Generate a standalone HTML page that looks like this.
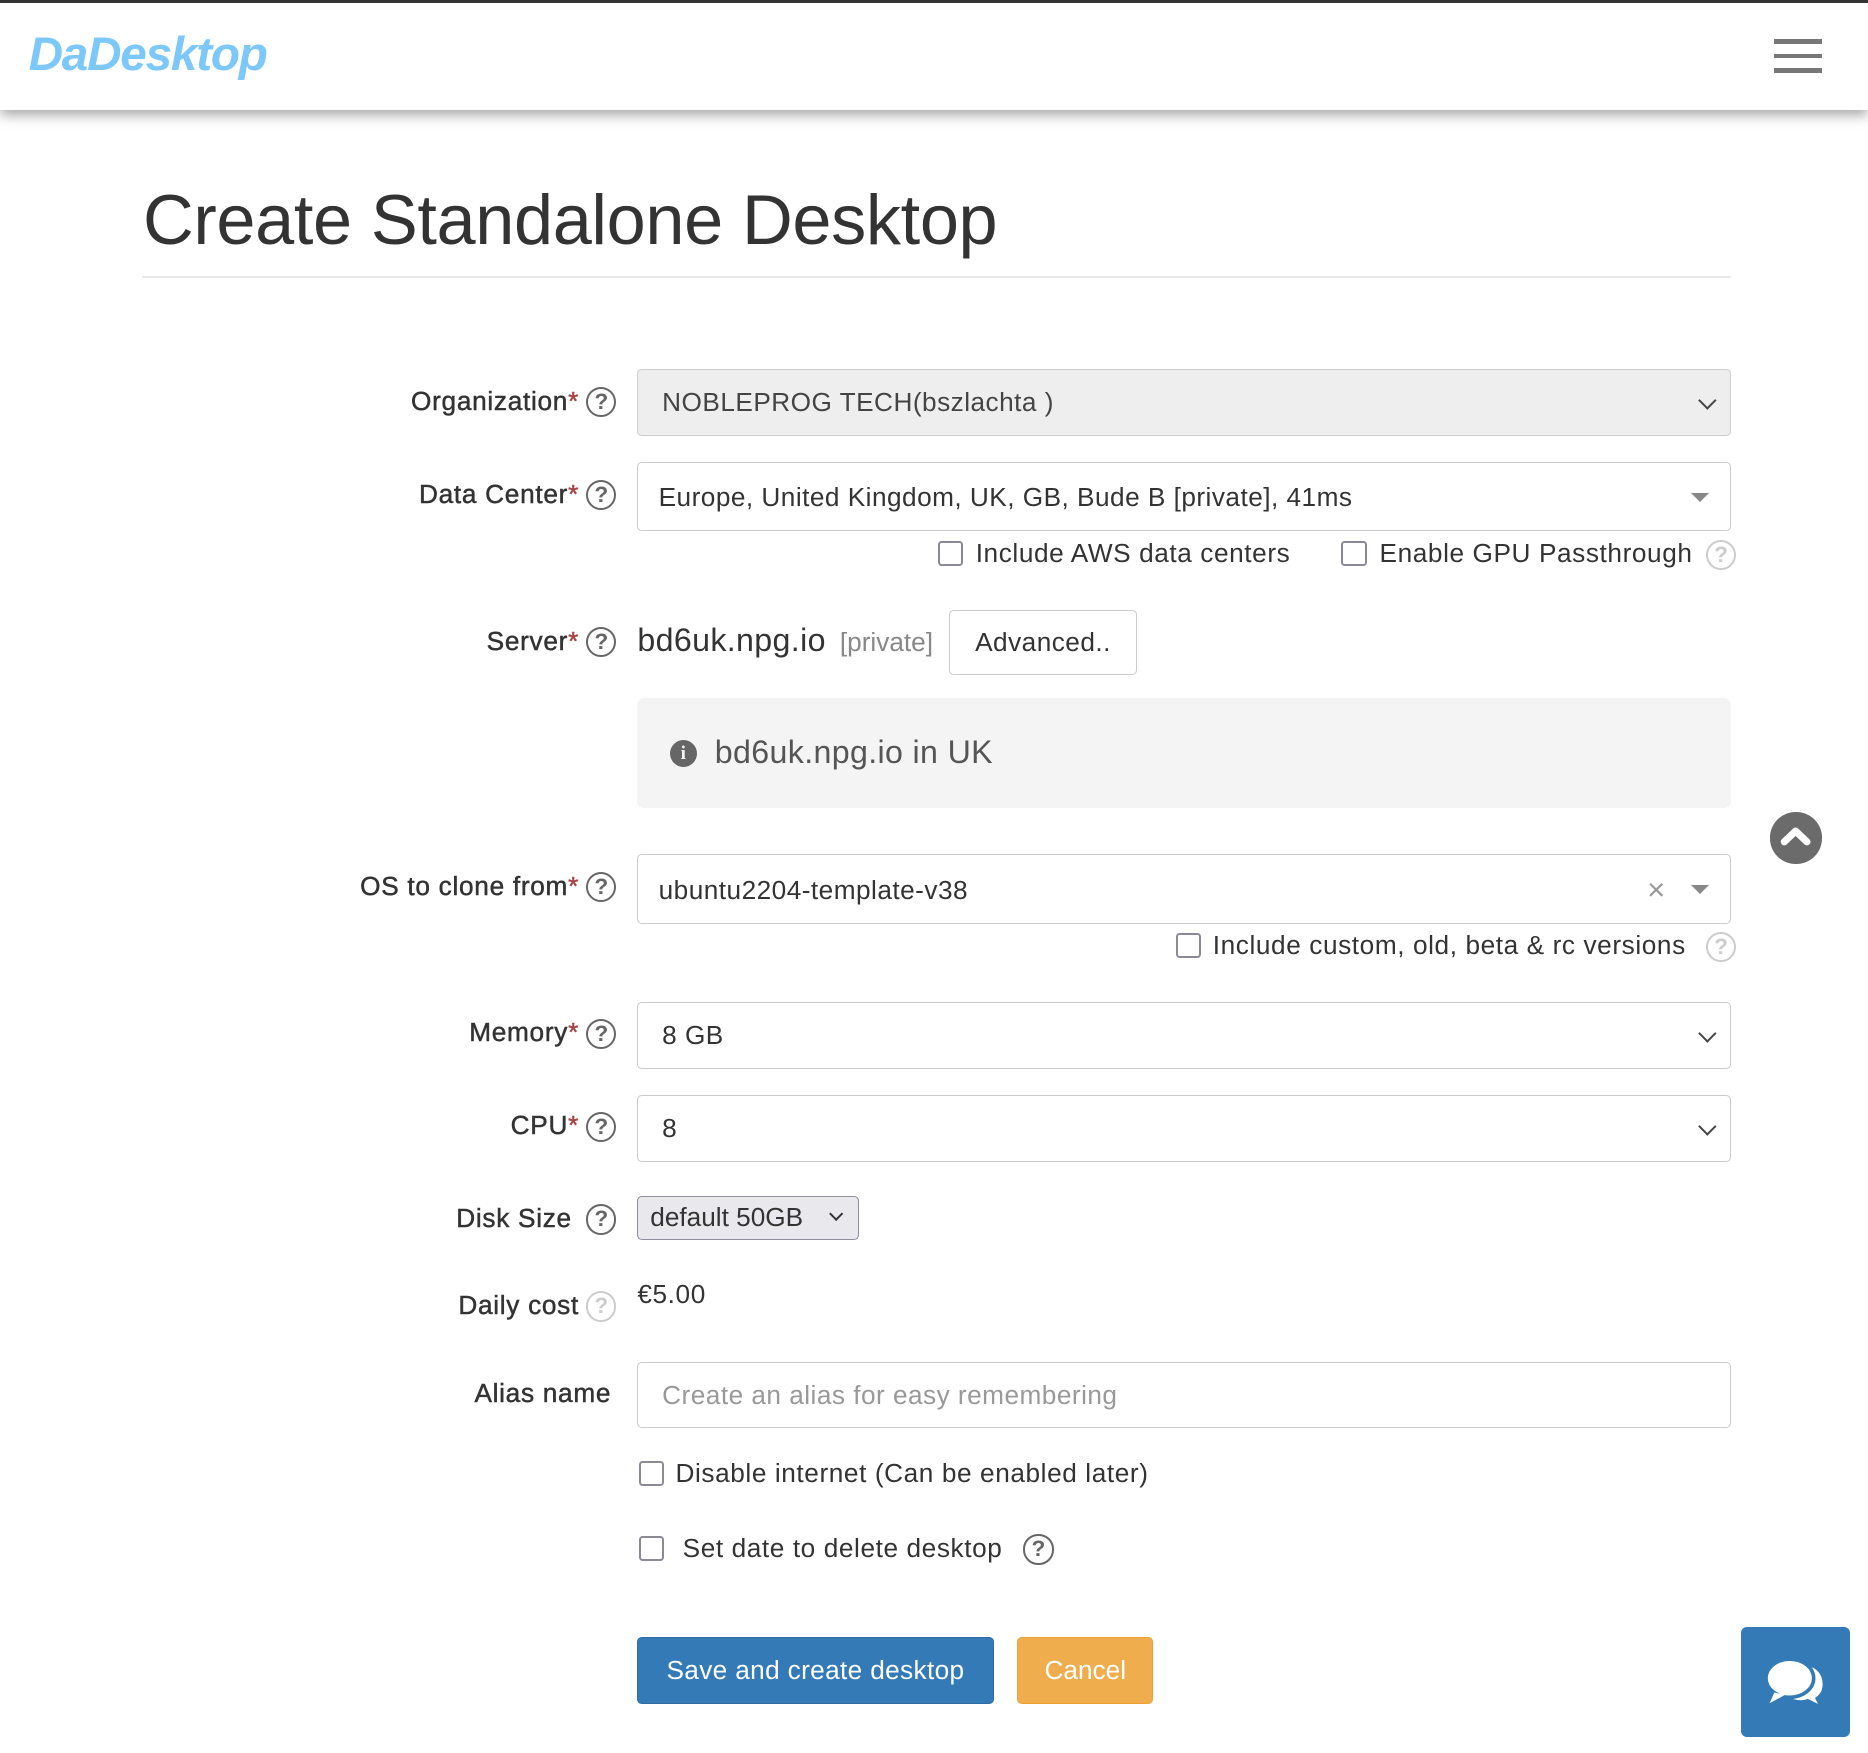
<!DOCTYPE html>
<html><head><meta charset="utf-8"><style>
html{zoom:1.19133}
body{margin:0;width:1568px;height:1471px;position:relative;overflow:hidden;background:#fff;font-family:"Liberation Sans",Arial,sans-serif;color:#333}
.a{position:absolute}
.nav{left:0;top:0;width:1568px;height:92px;border-top:3px solid #333;box-sizing:border-box;background:#fff;box-shadow:0 4px 10px rgba(0,0,0,.35)}
.logo{left:24px;top:23px;font-size:40px;font-weight:bold;font-style:italic;color:#7cc8f8;letter-spacing:-1px}
.bar{left:1489px;width:40px;height:4px;background:#777}
.lbl{font-size:22px;color:#333;text-align:right;width:400px;left:86px;line-height:28px;letter-spacing:0.6px;-webkit-text-stroke:0.4px #333}
.lbl b{color:#a94442;font-weight:normal;-webkit-text-stroke:0.4px #a94442}
.q{width:22px;height:22px;border:2px solid #666;border-radius:50%;font-size:19px;line-height:22px;text-align:center;color:#666;font-weight:bold}
.ql{border-color:#ccc;color:#ccc}
.inp{left:535px;width:918px;box-sizing:border-box;border:1px solid #ccc;border-radius:4px;font-size:22px;color:#333;padding-left:20px;background:#fff;letter-spacing:0.4px}
.chev{right:14px;width:9px;height:9px;border-right:2px solid #444;border-bottom:2px solid #444;transform:rotate(45deg)}
.tri{right:18px;width:0;height:0;border-left:8px solid transparent;border-right:8px solid transparent;border-top:8px solid #888}
.cb{width:18px;height:18px;border:2px solid #8a8a96;border-radius:3px}
.t22{font-size:22px;color:#333;line-height:28px;letter-spacing:0.5px}
</style></head><body>
<div class="a nav"></div>
<div class="a logo">DaDesktop</div>
<div class="a bar" style="top:33px"></div><div class="a bar" style="top:45px"></div><div class="a bar" style="top:57px"></div>

<div class="a" style="left:120px;top:150px;font-size:59px;color:#333;letter-spacing:-0.3px">Create Standalone Desktop</div>
<div class="a" style="left:119px;top:232px;width:1334px;height:1px;background:#e8e8e8"></div>

<div class="a lbl" style="top:323px">Organization<b>*</b></div><div class="a q" style="left:492px;top:325px">?</div>
<div class="a inp" style="top:310px;height:56px;background:#eee;line-height:54px;color:#444">NOBLEPROG TECH(bszlachta )<div class="a chev" style="top:20px"></div></div>

<div class="a lbl" style="top:401px">Data Center<b>*</b></div><div class="a q" style="left:492px;top:403px">?</div>
<div class="a inp" style="top:388px;height:58px;line-height:58px;padding-left:17px">Europe, United Kingdom, UK, GB, Bude B [private], 41ms<div class="a tri" style="top:25px"></div></div>

<div class="a cb" style="left:787px;top:454px"></div><div class="a t22" style="left:819px;top:451px">Include AWS data centers</div>
<div class="a cb" style="left:1126px;top:454px"></div><div class="a t22" style="left:1158px;top:451px">Enable GPU Passthrough</div>
<div class="a q ql" style="left:1432px;top:453px">?</div>

<div class="a lbl" style="top:525px">Server<b>*</b></div><div class="a q" style="left:492px;top:526px">?</div>
<div class="a" style="left:535px;top:522px;font-size:27px;color:#333;letter-spacing:0.3px">bd6uk.npg.io</div>
<div class="a" style="left:705px;top:526px;font-size:22px;color:#888">[private]</div>
<div class="a" style="left:797px;top:512px;width:157px;height:55px;box-sizing:border-box;border:1px solid #ccc;border-radius:4px;text-align:center;line-height:53px;font-size:22px;letter-spacing:0.4px">Advanced..</div>

<div class="a" style="left:535px;top:586px;width:918px;height:92px;background:#f4f4f4;border-radius:6px"></div>
<div class="a" style="left:562px;top:621px;width:23px;height:23px;border-radius:50%;background:#666;color:#f4f4f4;font-size:16px;font-weight:bold;text-align:center;line-height:23px;font-family:'Liberation Serif',serif">i</div>
<div class="a" style="left:600px;top:616px;font-size:27px;color:#555;letter-spacing:0.3px">bd6uk.npg.io in UK</div>

<div class="a" style="left:1486px;top:682px;width:43px;height:43px;border-radius:50%;background:#6b6b6b"></div>
<svg class="a" style="left:1486px;top:682px" width="43" height="43"><path d="M12 25 L21.5 16 L31 25" stroke="#fff" stroke-width="6" fill="none" stroke-linecap="round" stroke-linejoin="round"/></svg>

<div class="a lbl" style="top:730px">OS to clone from<b>*</b></div><div class="a q" style="left:492px;top:732px">?</div>
<div class="a inp" style="top:717px;height:59px;line-height:59px;padding-left:17px">ubuntu2204-template-v38
<div class="a" style="right:54px;top:0;color:#999;font-size:26px">×</div><div class="a tri" style="top:25px"></div></div>
<div class="a cb" style="left:987px;top:783px"></div><div class="a t22" style="left:1018px;top:780px">Include custom, old, beta &amp; rc versions</div>
<div class="a q ql" style="left:1432px;top:782px">?</div>

<div class="a lbl" style="top:853px">Memory<b>*</b></div><div class="a q" style="left:492px;top:855px">?</div>
<div class="a inp" style="top:841px;height:56px;line-height:54px">8 GB<div class="a chev" style="top:20px"></div></div>

<div class="a lbl" style="top:931px">CPU<b>*</b></div><div class="a q" style="left:492px;top:933px">?</div>
<div class="a inp" style="top:919px;height:56px;line-height:54px">8<div class="a chev" style="top:20px"></div></div>

<div class="a lbl" style="top:1009px;width:394px">Disk Size</div><div class="a q" style="left:492px;top:1011px">?</div>
<div class="a" style="left:535px;top:1004px;width:186px;height:37px;box-sizing:border-box;background:#e9e9ed;border:1px solid #8f8f9d;border-radius:4px;font-size:22px;line-height:35px;padding-left:10px">default 50GB<div class="a" style="left:162px;top:10px;width:7px;height:7px;border-right:2px solid #333;border-bottom:2px solid #333;transform:rotate(45deg)"></div></div>

<div class="a lbl" style="top:1082px">Daily cost</div><div class="a q ql" style="left:492px;top:1084px">?</div>
<div class="a t22" style="left:535px;top:1073px">€5.00</div>

<div class="a lbl" style="top:1156px;width:427px">Alias name</div>
<div class="a inp" style="top:1143px;height:56px;line-height:54px;color:#999">Create an alias for easy remembering</div>

<div class="a cb" style="left:536px;top:1226px"></div><div class="a t22" style="left:567px;top:1223px">Disable internet (Can be enabled later)</div>
<div class="a cb" style="left:536px;top:1289px"></div><div class="a t22" style="left:573px;top:1286px">Set date to delete desktop</div>
<div class="a q" style="left:859px;top:1288px">?</div>

<div class="a" style="left:535px;top:1374px;width:299px;height:56px;background:#337ab7;border:1px solid #2e6da4;box-sizing:border-box;border-radius:4px;color:#fff;font-size:22px;text-align:center;line-height:54px;letter-spacing:0.3px">Save and create desktop</div>
<div class="a" style="left:854px;top:1374px;width:114px;height:56px;background:#f0ad4e;border:1px solid #eea236;box-sizing:border-box;border-radius:4px;color:#fff;font-size:22px;text-align:center;line-height:54px">Cancel</div>

<div class="a" style="left:1461px;top:1366px;width:92px;height:92px;background:#337ab7;border-radius:5px"></div>
<svg class="a" style="left:1461px;top:1366px" width="92" height="92"><path d="M50 30 Q70 32 70 48 Q70 56 64 60 L68 68 L56 62 Q50 64 44 62" fill="#fff" stroke="#337ab7" stroke-width="3"/><ellipse cx="41" cy="43" rx="20" ry="16" fill="#fff" stroke="#337ab7" stroke-width="3"/><path d="M28 55 L24 64 L37 57Z" fill="#fff"/></svg>
</body></html>
